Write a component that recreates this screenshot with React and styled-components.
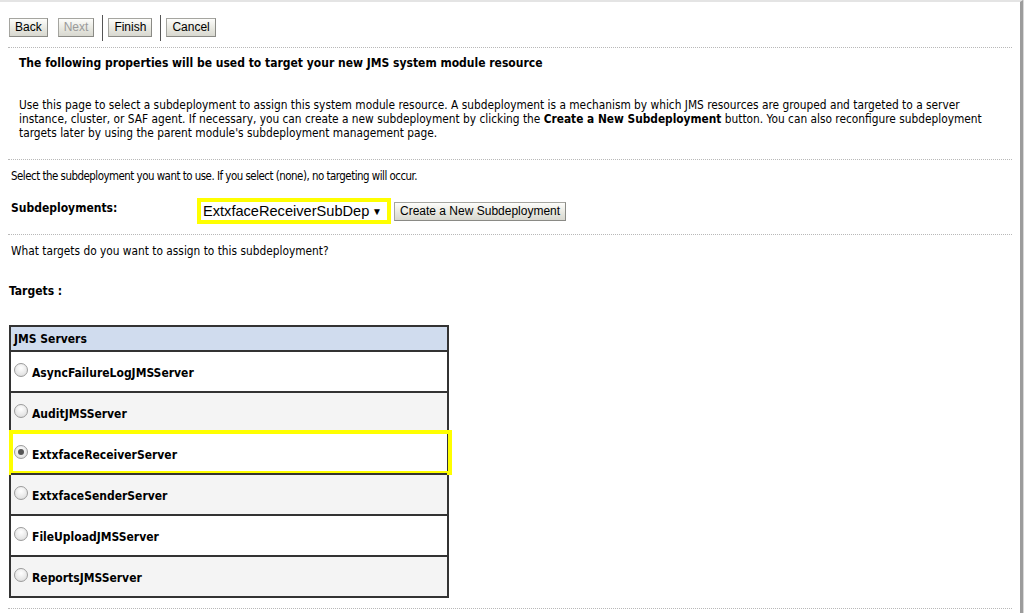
import React from "react";
import styled, { createGlobalStyle } from "styled-components";

const Global = createGlobalStyle`
  html, body { margin: 0; padding: 0; background: #fff; }
  body { font-family: "DejaVu Sans Condensed", "DejaVu Sans", sans-serif; color: #000; }
`;

const Page = styled.div`
  width: 1023px;
  height: 613px;
  box-sizing: border-box;
  border-top: 2px solid #e4e4e4;
  border-right: 3px solid #9c9c9c;
  box-shadow: 1px 0 0 #d8d8d8;
  overflow: hidden;
`;

const Toolbar = styled.div`
  display: flex;
  align-items: center;
  padding: 12px 0 0 9px;
  height: 27px;
`;

const Btn = styled.button`
  font-family: "Liberation Sans", Arial, sans-serif;
  font-size: 12px;
  height: 19px;
  padding: 0 5px;
  margin-right: ${(p) => p.$mr || 0}px;
  border: 1px solid #a5a5a0;
  border-right-color: #8a8a85;
  border-bottom-color: #8a8a85;
  background: linear-gradient(#fdfdfb, #e6e6de 60%, #d8d8d0);
  color: ${(p) => (p.disabled ? "#9a9a9a" : "#000")};
  line-height: 17px;
  cursor: default;
`;

const Sep = styled.span`
  display: inline-block;
  width: 1px;
  height: 26px;
  background: #555;
  margin: 0 5px 0 8px;
`;

const Dotted = styled.div`
  height: 0;
  border-top: 1px dotted #b8b8b8;
  margin: ${(p) => p.$m || "0"};
  width: 1004px;
`;

const Heading = styled.div`
  font-weight: bold;
  font-size: 12px;
  padding: 8px 0 0 19px;
  height: 14px;
  line-height: 14px;
`;

const Para = styled.p`
  margin: 0;
  padding: 28px 0 0 19px;
  font-size: 11.8px;
  line-height: 14px;
  height: 61px;
  white-space: nowrap;
`;

const Line = styled.div`
  font-size: ${(p) => p.$fs || 11.8}px;
  letter-spacing: ${(p) => p.$ls || 0}px;
  padding-left: ${(p) => p.$pl || 11}px;
  line-height: 14px;
  margin-top: ${(p) => p.$mt || 0}px;
`;

const SubRow = styled.div`
  display: flex;
  align-items: center;
  padding-left: 11px;
  margin-top: 15px;
  height: 26px;
`;

const Label = styled.div`
  width: 186px;
  font-weight: bold;
  font-size: 12px;
  align-self: flex-start;
  padding-top: 3px;
`;

const SelectBox = styled.div`
  box-sizing: border-box;
  width: 194px;
  height: 26px;
  border: 4px solid #ffff00;
  display: flex;
  align-items: center;
  justify-content: space-between;
  padding: 0 5px 0 2px;
  font-family: "Liberation Sans", Arial, sans-serif;
  font-size: 14.6px;
  margin-right: 3px;
`;

const Arrow = styled.span`
  font-size: 10px;
`;

const TargetsLabel = styled.div`
  font-weight: bold;
  font-size: 12px;
  padding-left: 9px;
  margin-top: 26px;
  line-height: 14px;
`;

const Table = styled.div`
  margin: 27px 0 0 9px;
  width: 440px;
  box-sizing: border-box;
  border: 2px solid #333;
`;

const HeadCell = styled.div`
  height: 23px;
  background: #d0dcee;
  font-weight: bold;
  font-size: 12px;
  line-height: 24px;
  padding-left: 3px;
`;

const Row = styled.div`
  position: relative;
  box-sizing: border-box;
  height: 41px;
  border-top: 2px solid #333;
  background: ${(p) => (p.$alt ? "#f4f4f4" : "#fff")};
  display: flex;
  align-items: center;
  padding: 3px 0 0 3px;
  font-weight: bold;
  font-size: 12px;
`;

const Radio = styled.span`
  position: relative;
  width: 12px;
  height: 12px;
  border-radius: 50%;
  border: 1px solid #9c9c9c;
  background: radial-gradient(circle at 50% 35%, #fff, #e4e4e4 70%, #c8c8c8);
  margin-right: 4px;
  margin-top: -6px;
  flex: none;
  &::after {
    content: "";
    display: ${(p) => (p.$checked ? "block" : "none")};
    position: absolute;
    left: 3px;
    top: 3px;
    width: 6px;
    height: 6px;
    border-radius: 50%;
    background: #555;
  }
`;

const Highlight = styled.div`
  position: absolute;
  left: -2px;
  right: -5px;
  top: -4px;
  bottom: -2px;
  border: 4px solid #ffff00;
  pointer-events: none;
`;

const servers = [
  "AsyncFailureLogJMSServer",
  "AuditJMSServer",
  "ExtxfaceReceiverServer",
  "ExtxfaceSenderServer",
  "FileUploadJMSServer",
  "ReportsJMSServer",
];

export default function App() {
  return (
    <Page>
      <Global />
      <Toolbar>
        <Btn $mr={10}>Back</Btn>
        <Btn disabled>Next</Btn>
        <Sep />
        <Btn>Finish</Btn>
        <Sep />
        <Btn>Cancel</Btn>
      </Toolbar>
      <Dotted $m="6px 0 0 8px" />
      <Heading>The following properties will be used to target your new JMS system module resource</Heading>
      <Para>
        Use this page to select a subdeployment to assign this system module resource. A subdeployment is a
        mechanism by which JMS resources are grouped and targeted to a server
        <br />
        instance, cluster, or SAF agent. If necessary, you can create a new subdeployment by clicking the{" "}
        <b>Create a New Subdeployment</b> button. You can also reconfigure subdeployment
        <br />
        targets later by using the parent module's subdeployment management page.
      </Para>
      <Dotted $m="0 0 0 8px" />
      <Line $mt={9} $fs={11.4} $ls={-0.49}>
        Select the subdeployment you want to use. If you select (none), no targeting will occur.
      </Line>
      <SubRow>
        <Label>Subdeployments:</Label>
        <SelectBox>
          <span>ExtxfaceReceiverSubDep</span>
          <Arrow>▼</Arrow>
        </SelectBox>
        <Btn>Create a New Subdeployment</Btn>
      </SubRow>
      <Dotted $m="10px 0 0 8px" />
      <Line $mt={9}>What targets do you want to assign to this subdeployment?</Line>
      <TargetsLabel>Targets :</TargetsLabel>
      <Table>
        <HeadCell>JMS Servers</HeadCell>
        {servers.map((s, i) => (
          <Row key={s} $alt={i % 2 === 1 && i !== 2}>
            <Radio $checked={i === 2} />
            {s}
            {i === 2 && <Highlight />}
          </Row>
        ))}
      </Table>
      <Dotted $m="10px 0 0 8px" />
    </Page>
  );
}
